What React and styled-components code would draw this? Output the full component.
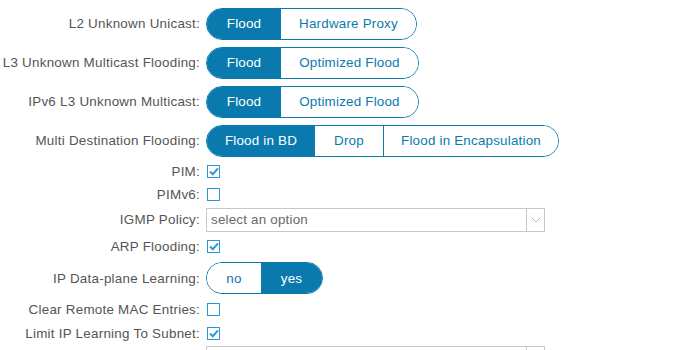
import styled, { createGlobalStyle } from "styled-components";

const GlobalStyle = createGlobalStyle`
  body {
    margin: 0;
    background: #ffffff;
    font-family: "Liberation Sans", Arial, sans-serif;
  }
`;

const BLUE = "#0a7aae";
const CHECK = "#2a9ad6";

const Form = styled.div`
  width: 681px;
  height: 350px;
  overflow: hidden;
  padding-top: 4px;
  box-sizing: border-box;
`;

const Row = styled.div`
  display: grid;
  grid-template-columns: 200px 1fr;
  column-gap: 6px;
  align-items: center;
  height: ${(p) => p.h}px;
`;

const Label = styled.div`
  text-align: right;
  font-size: 13.4px;
  letter-spacing: 0.25px;
  color: #555555;
  white-space: nowrap;
`;

const Segmented = styled.div`
  display: inline-flex;
  justify-self: start;
  height: 32px;
  border: 1px solid ${BLUE};
  border-radius: 17px;
  overflow: hidden;
  box-sizing: border-box;
`;

const Segment = styled.div`
  display: flex;
  align-items: center;
  justify-content: center;
  width: ${(p) => p.w}px;
  font-size: 13.4px;
  letter-spacing: 0.2px;
  background: ${(p) => (p.active ? BLUE : "#ffffff")};
  color: ${(p) => (p.active ? "#ffffff" : BLUE)};
  border-left: ${(p) => (p.divider ? `1px solid ${BLUE}` : "none")};
`;

const Box = styled.div`
  width: 13px;
  height: 13px;
  border: 1.5px solid ${CHECK};
  box-sizing: border-box;
  display: flex;
  align-items: center;
  justify-content: center;
  margin-left: 1px;
`;

const Select = styled.div`
  display: flex;
  width: 339px;
  height: 24px;
  border: 1px solid #c8c8c8;
  box-sizing: border-box;
  font-size: 13.4px;
  letter-spacing: 0.2px;
  color: #6a6a6a;
`;

const SelectText = styled.div`
  flex: 1;
  display: flex;
  align-items: center;
  padding-left: 4px;
`;

const Arrow = styled.div`
  width: 17px;
  border-left: 1px solid #c8c8c8;
  display: flex;
  align-items: center;
  justify-content: center;
`;

function SegRow({ label, options, h = 39 }) {
  return (
    <Row h={h}>
      <Label>{label}</Label>
      <Segmented>
        {options.map((o, i) => (
          <Segment
            key={o.text}
            active={o.active}
            w={o.w}
            divider={i > 0 && !o.active && !options[i - 1].active}
          >
            {o.text}
          </Segment>
        ))}
      </Segmented>
    </Row>
  );
}

function CheckRow({ label, checked, h = 23 }) {
  return (
    <Row h={h}>
      <Label>{label}</Label>
      <Box>
        {checked && (
          <svg width="10" height="9" viewBox="0 0 10 9">
            <path d="M1 4.6 L3.8 7.2 L9 1.4" fill="none" stroke={CHECK} strokeWidth="2" />
          </svg>
        )}
      </Box>
    </Row>
  );
}

function SelectRow({ label, text, h = 27 }) {
  return (
    <Row h={h}>
      <Label>{label}</Label>
      <Select>
        <SelectText>{text}</SelectText>
        <Arrow>
          <svg width="10" height="6" viewBox="0 0 10 6">
            <path d="M0.5 0.5 L5 5 L9.5 0.5" fill="none" stroke="#b5b5b5" strokeWidth="1" />
          </svg>
        </Arrow>
      </Select>
    </Row>
  );
}

export default function App() {
  return (
    <Form>
      <GlobalStyle />
      <SegRow
        label="L2 Unknown Unicast:"
        options={[
          { text: "Flood", active: true, w: 74 },
          { text: "Hardware Proxy", w: 135 },
        ]}
      />
      <SegRow
        label="L3 Unknown Multicast Flooding:"
        options={[
          { text: "Flood", active: true, w: 74 },
          { text: "Optimized Flood", w: 137 },
        ]}
      />
      <SegRow
        label="IPv6 L3 Unknown Multicast:"
        options={[
          { text: "Flood", active: true, w: 74 },
          { text: "Optimized Flood", w: 137 },
        ]}
      />
      <SegRow
        label="Multi Destination Flooding:"
        options={[
          { text: "Flood in BD", active: true, w: 108 },
          { text: "Drop", w: 68 },
          { text: "Flood in Encapsulation", w: 174 },
        ]}
      />
      <CheckRow label="PIM:" checked />
      <CheckRow label="PIMv6:" />
      <SelectRow label="IGMP Policy:" text="select an option" />
      <CheckRow label="ARP Flooding:" checked h={27} />
      <SegRow
        label="IP Data-plane Learning:"
        h={36}
        options={[
          { text: "no", w: 54 },
          { text: "yes", active: true, w: 61 },
        ]}
      />
      <CheckRow label="Clear Remote MAC Entries:" h={27} />
      <CheckRow label="Limit IP Learning To Subnet:" checked h={21} />
      <SelectRow label="" text="" />
    </Form>
  );
}
